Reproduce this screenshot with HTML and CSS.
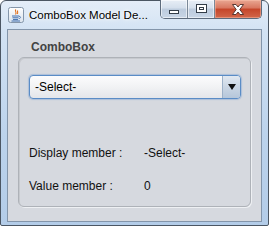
FILE: index.html
```html
<!DOCTYPE html>
<html lang="en">
<head>
    <meta charset="UTF-8">
    <title>ComboBox Model Demo</title>
    <link rel="stylesheet" href="styles.css">
</head>
<body>

    <div class="window">
        <div class="titlebar">
            <svg class="app-icon" width="16" height="16" viewBox="0 0 16 16">
                <defs>
                    <linearGradient id="ic" x1="0" y1="0" x2="0" y2="1">
                        <stop offset="0" stop-color="#ffffff"/>
                        <stop offset="1" stop-color="#d9e2ec"/>
                    </linearGradient>
                </defs>
                <rect x="0.5" y="0.5" width="15" height="15" rx="2" fill="url(#ic)" stroke="#8596aa"/>
                <path d="M8 2.5 C6 4 9.5 5 7.5 7.5 M9.8 3.5 C8.8 4.6 10.6 5.4 9.2 7" fill="none" stroke="#e0701f" stroke-width="1.1"/>
                <path d="M4 9 H11 M4.5 10.8 H10.5 M5 12.6 H10 M3.5 14 H12" fill="none" stroke="#3f6fb0" stroke-width="1"/>
                <path d="M11 9.2 C13 9.2 13 11.5 10.8 11.6" fill="none" stroke="#3f6fb0" stroke-width="0.9"/>
            </svg>
            <span class="title">ComboBox Model De...</span>
            <div class="caption-buttons">
                <div class="cap cap-min">
                    <span class="glyph-min"></span>
                </div>
                <div class="cap cap-max">
                    <span class="glyph-max"></span>
                </div>
                <div class="cap cap-close">
                    <svg width="14" height="11" viewBox="0 0 14 11">
                        <path d="M1.5 0.5 H5 L7 3 L9 0.5 H12.5 L8.8 5.5 L12.5 10.5 H9 L7 8 L5 10.5 H1.5 L5.2 5.5 Z" fill="#ffffff" stroke="#4a2a26" stroke-width="0.9" stroke-linejoin="round"/>
                    </svg>
                </div>
            </div>
        </div>

        <div class="client">
            <div class="group-title">ComboBox</div>
            <div class="group">
                <div class="combo">
                    <span class="combo-text">-Select-</span>
                    <span class="combo-arrow"></span>
                </div>
                <div class="fields">
                    <span>Display member :</span>
                    <span id="display">-Select-</span>
                    <span>Value member :</span>
                    <span id="value">0</span>
                </div>
            </div>
        </div>
    </div>

</body>
</html>
```

FILE: styles.css
```css
* {
    margin: 0;
    padding: 0;
    box-sizing: border-box;
}
body {
    background: #ffffff;
    font-family: 'Liberation Sans', Arial, sans-serif;
    font-size: 12px;
    color: #111;
}
.window {
    width: 269px;
    height: 226px;
    border: 1px solid #4b5663;
    border-radius: 6px 6px 2px 2px;
    background: linear-gradient(180deg, #e4edf8 0%, #d2e2f3 14%, #bcd3ec 60%, #b3cce8 100%);
    display: flex;
    flex-direction: column;
}
.titlebar {
    height: 28px;
    display: flex;
    align-items: flex-start;
}
.app-icon {
    margin: 6px 0 0 7px;
    flex: none;
}
.title {
    margin: 7px 0 0 5px;
    font-size: 11.5px;
    line-height: 14px;
    color: #000;
    white-space: nowrap;
    text-shadow: 0 0 6px #ffffff, 0 0 3px #ffffff;
}
.caption-buttons {
    margin: -1px 6px 0 auto;
    display: flex;
    height: 19px;
    border: 1px solid #5d6b7c;
    border-top: none;
    border-radius: 0 0 5px 5px;
    overflow: hidden;
}
.cap {
    height: 18px;
    display: flex;
    align-items: center;
    justify-content: center;
}
.cap-min,
.cap-max {
    width: 27px;
    background: linear-gradient(180deg, #e8eef6 0%, #d4dfec 45%, #bccbdd 50%, #c9d6e6 100%);
    border-right: 1px solid #7a8898;
    box-shadow: inset 0 0 0 1px rgba(255, 255, 255, 0.55);
}
.cap-close {
    width: 46px;
    background: linear-gradient(180deg, #e9a792 0%, #d8765f 45%, #c54529 50%, #d2674a 100%);
    box-shadow: inset 0 0 0 1px rgba(255, 200, 180, 0.45);
}
.glyph-min {
    width: 10px;
    height: 4px;
    margin-top: 6px;
    background: #fff;
    border: 1px solid #333d48;
}
.glyph-max {
    width: 11px;
    height: 9px;
    margin-top: -2px;
    border: 1px solid #333d48;
    background: #fff;
    box-shadow: inset 0 0 0 2px #fff, inset 0 0 0 3px #333d48;
}
.client {
    flex: 1;
    margin: 0 6px 3px 6px;
    border: 1px solid #8395aa;
    background: #d6d9df;
    padding: 10px 10px 14px 10px;
    display: flex;
    flex-direction: column;
}
.group-title {
    margin-left: 13px;
    font-weight: bold;
    line-height: 14px;
    color: #434343;
}
.group {
    flex: 1;
    margin-top: 3px;
    border: 1px solid #aeb2b8;
    border-radius: 6px;
    box-shadow: inset 1px 1px 0 #c6c9ce, 1px 1px 0 #eef0f3;
    padding: 17px 9px 0 10px;
}
.combo {
    height: 24px;
    display: flex;
    border: 1px solid #5a8cc6;
    border-radius: 4px;
    box-shadow: 0 0 1px 1px rgba(120, 160, 210, 0.45);
    background: linear-gradient(180deg, #fcfcfd 0%, #f1f2f4 50%, #e4e6ea 100%);
    overflow: hidden;
}
.combo-text {
    flex: 1;
    padding-left: 5px;
    line-height: 22px;
    color: #000;
}
.combo-arrow {
    width: 18px;
    border-left: 1px solid #9db1c8;
    background: linear-gradient(180deg, #e1e8f1 0%, #cad6e4 50%, #b5c6da 100%);
    position: relative;
}
.combo-arrow::after {
    content: "";
    position: absolute;
    left: 5px;
    top: 8px;
    border-left: 4px solid transparent;
    border-right: 4px solid transparent;
    border-top: 6px solid #111;
}
.fields {
    margin-top: 46px;
    padding-left: 0;
    display: grid;
    grid-template-columns: 115px auto;
    row-gap: 17px;
    line-height: 16px;
    color: #111;
}
```
